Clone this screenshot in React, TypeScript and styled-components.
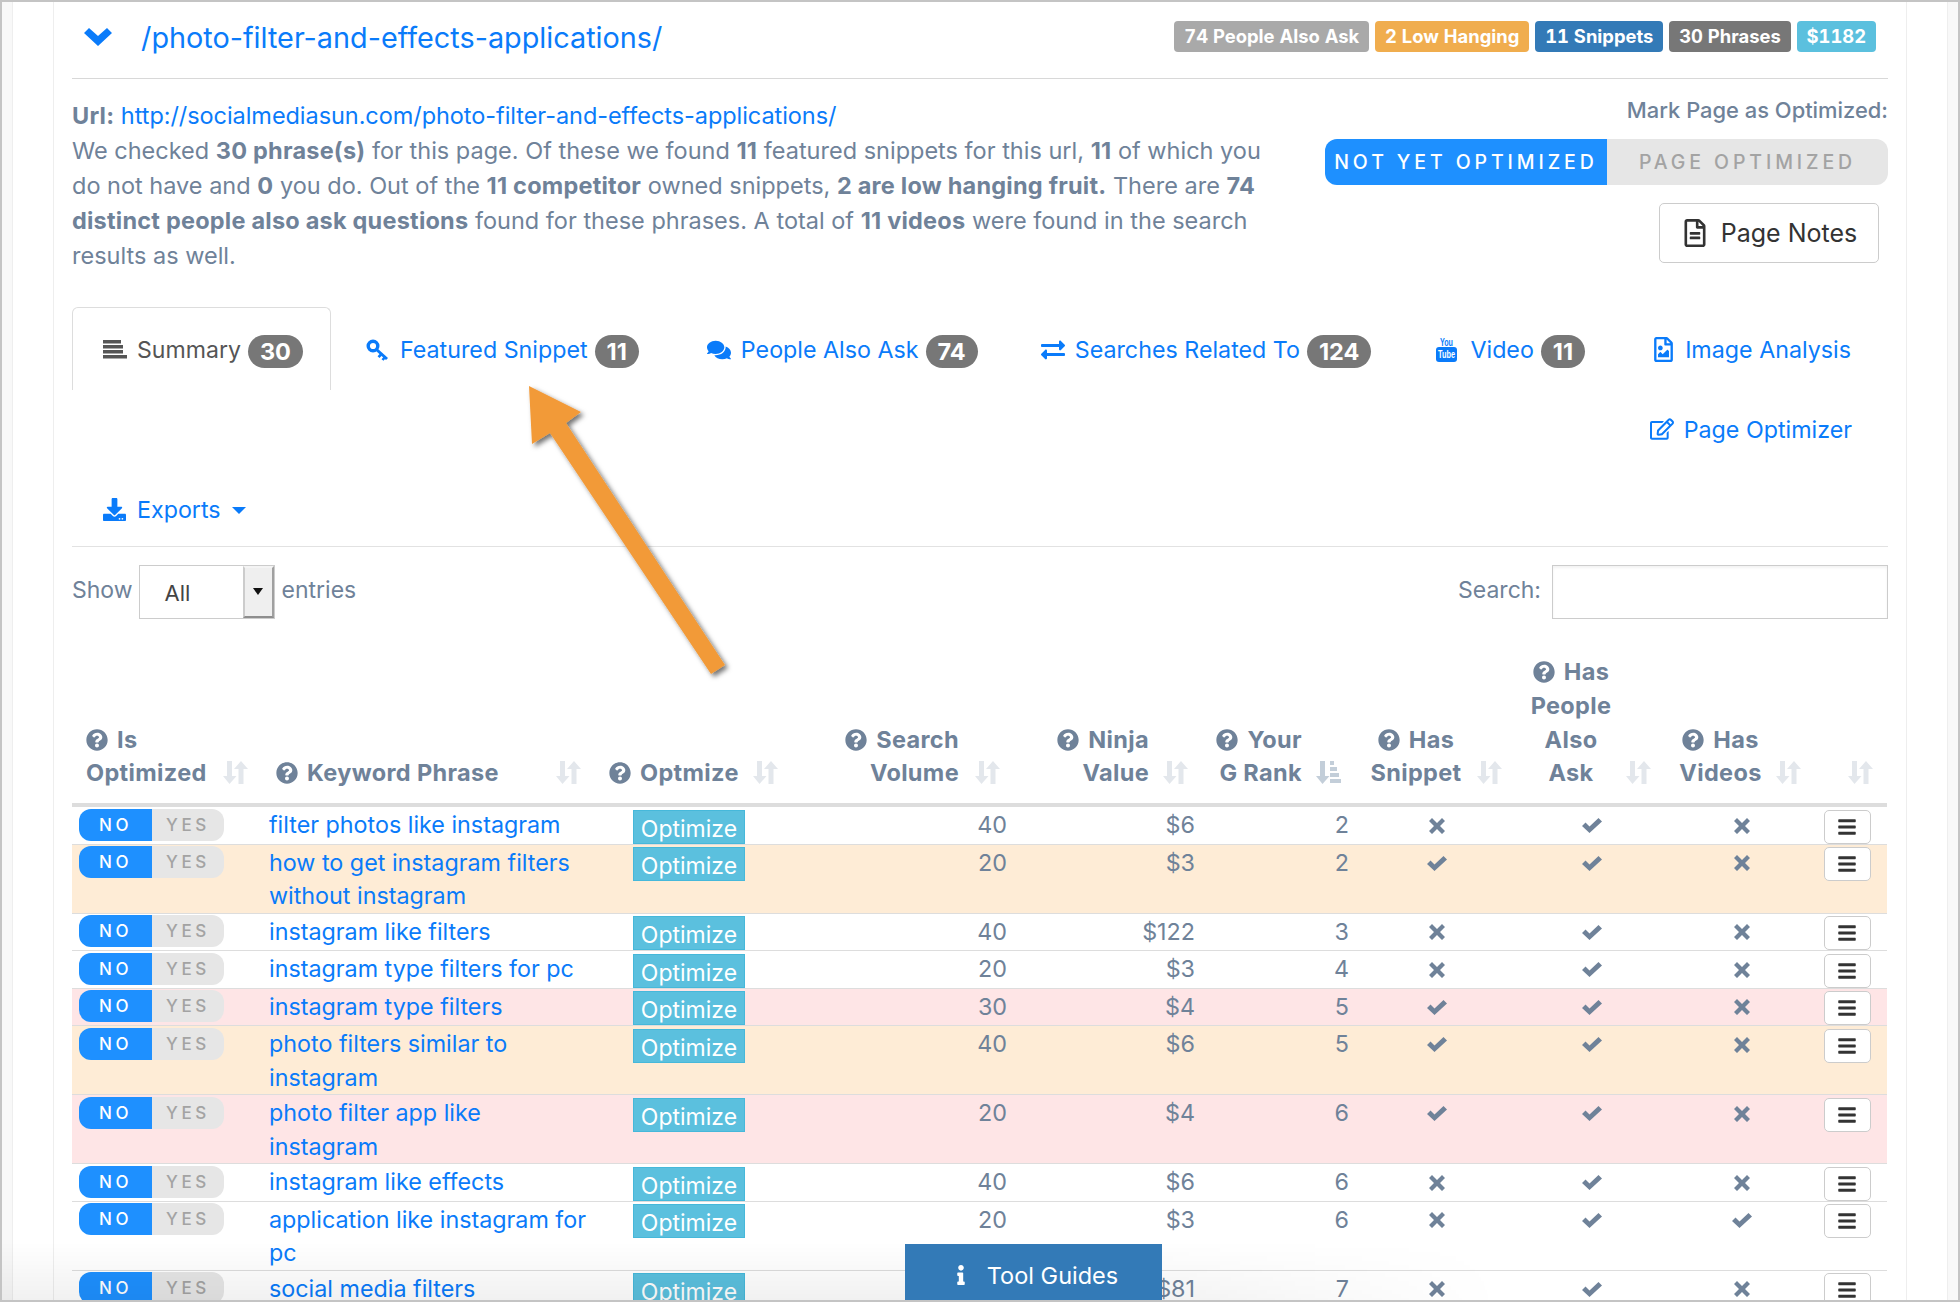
import styled, { createGlobalStyle } from "styled-components"
import {
  FaBars,
  FaComments,
  FaDownload,
  FaExchangeAlt,
  FaInfo,
  FaQuestionCircle,
  FaRegEdit,
  FaRegFileAlt,
  FaRegFileImage
} from "react-icons/fa"

const SLATE = "#6f8299"
const LINK = "#0a7bfa"

const GlobalStyle = createGlobalStyle`
  html, body { margin: 0; padding: 0; background: #fff; }
  body { font-family: Inter, "Liberation Sans", sans-serif; color: ${SLATE}; }
  * { box-sizing: border-box; }
  a { color: ${LINK}; text-decoration: none; }
`

const Window = styled.div`
  position: relative;
  width: 1960px;
  height: 1302px;
  overflow: hidden;
  background: #f8f8f8;
  border: 2px solid #c4c4c4;
  padding: 0 10px;
`

const Column = styled.div`
  height: 100%;
  background: #fff;
  border-left: 1px solid #eee;
  border-right: 1px solid #eee;
  padding: 0 40px;
`

const Panel = styled.div`
  height: 100%;
  background: #fff;
  border-left: 1px solid #eee;
  border-right: 1px solid #eee;
  padding: 0 18px;
`

const Header = styled.div`
  height: 77px;
  border-bottom: 1px solid #d8d8d8;
  display: flex;
  justify-content: space-between;
  padding: 19px 12px 0 12px;
`

const TitleWrap = styled.div`
  display: flex;
  align-items: flex-start;
  color: ${LINK};
  gap: 29px;
`

const Chevron = styled.svg`
  margin-top: 7px;
  flex: none;
`

const Title = styled.a`
  font-size: 28.8px;
  line-height: 34px;
`

const Badges = styled.div`
  display: flex;
  gap: 6px;
`

const Badge = styled.span<{ $bg: string }>`
  height: 31px;
  line-height: 30px;
  padding: 0 9.9px;
  border-radius: 4px;
  background: ${p => p.$bg};
  color: #fff;
  font-size: 18.4px;
  font-weight: 700;
  font-variant-numeric: tabular-nums;
`

const Intro = styled.div`
  display: flex;
  justify-content: space-between;
  padding-top: 19px;
  height: 228px;
`

const Para = styled.div`
  width: 1210px;
  font-size: 23.5px;
  line-height: 35px;
  b {
    font-weight: 700;
    letter-spacing: 0.22px;
  }
  a { letter-spacing: -0.06px; }
`

const Side = styled.div`
  width: 563px;
  display: flex;
  flex-direction: column;
  align-items: flex-end;
  margin-top: -3px;
`

const MarkLabel = styled.div`
  font-size: 21.9px;
  line-height: 30px;
  font-weight: 500;
`

const Switch = styled.div`
  display: flex;
  width: 563px;
  height: 46px;
  margin-top: 13.5px;
  border-radius: 12px;
  overflow: hidden;
`

const SwitchPart = styled.div<{ $on?: boolean }>`
  width: ${p => (p.$on ? 282 : 281)}px;
  background: ${p => (p.$on ? "#1e90ff" : "#e6e6e6")};
  color: ${p => (p.$on ? "#fff" : "#a3a3a3")};
  font-size: 19.5px;
  font-weight: 500;
  letter-spacing: 3.9px;
  line-height: 46px;
  text-align: center;
  white-space: nowrap;
`

const NotesButton = styled.button`
  display: flex;
  align-items: center;
  justify-content: center;
  gap: 12px;
  width: 220px;
  height: 60px;
  margin: 18px 9px 0 0;
  background: #fff;
  border: 1px solid #ccc;
  border-radius: 5px;
  color: #333;
  font-family: inherit;
  font-size: 25px;
`

const TabRow = styled.div<{ $end?: boolean; $h: number; $top?: number }>`
  display: flex;
  height: ${p => p.$h}px;
  padding: ${p => p.$top ?? 0}px ${p => (p.$end ? 5 : 0)}px 0 0;
  justify-content: ${p => (p.$end ? "flex-end" : "flex-start")};
  align-items: center;
`

const Tab = styled.a<{ $active?: boolean; $gap?: number }>`
  display: flex;
  align-items: center;
  height: 83px;
  padding: 1px ${p => (p.$active ? 27 : 30)}px 0 30px;
  margin-left: ${p => p.$gap ?? 0}px;
  font-size: ${p => (p.$active ? 23.1 : 23.25)}px;
  color: ${p => (p.$active ? "#555" : LINK)};
  border: 1px solid ${p => (p.$active ? "#ddd" : "transparent")};
  border-bottom: 0;
  border-radius: 6px 6px 0 0;
  white-space: nowrap;
  svg { flex: none; }
`

const TabIcon = styled.span`
  display: flex;
  width: 34px;
`

const Pill = styled.span`
  height: 33px;
  line-height: 33px;
  margin-left: 7px;
  padding: 0 12px;
  margin-top: 4px;
  background: #777;
  color: #fff;
  border-radius: 17px;
  font-size: 23.5px;
  font-weight: 700;
`

const Caret = styled.span`
  width: 0;
  height: 0;
  margin: 2px 0 0 11px;
  border-left: 7px solid transparent;
  border-right: 7px solid transparent;
  border-top: 7px solid ${LINK};
`

const Filters = styled.div`
  border-top: 1px solid #e2e2e2;
  padding-top: 18px;
  display: flex;
  justify-content: space-between;
  font-size: 23px;
`

const FilterGroup = styled.div`
  display: flex;
  align-items: flex-start;
  gap: 6px;
  line-height: 50px;
`

const SelectBox = styled.div`
  position: relative;
  width: 136px;
  height: 54px;
  margin-right: 1px;
  border: 1px solid #ccc;
  background: #fff;
  color: #444;
  font-size: 22px;
  line-height: 54px;
  padding-left: 25px;
`

const SelectArrow = styled.span`
  position: absolute;
  right: 0;
  top: 0;
  bottom: 0;
  width: 31px;
  display: flex;
  align-items: center;
  justify-content: center;
  background: #efefef;
  border: 2px solid;
  border-color: #f4f4f4 #a0a0a0 #8e8e8e #ccc;
  &::after {
    content: "";
    border-left: 5px solid transparent;
    border-right: 5px solid transparent;
    border-top: 7px solid #111;
    margin-top: -2px;
  }
`

const SearchInput = styled.input`
  width: 336px;
  height: 54px;
  border: 1px solid #ccc;
  box-shadow: inset 0 2px 3px rgba(0, 0, 0, 0.05);
  margin-left: 5px;
`

const Table = styled.table`
  width: 1815px;
  margin-top: 36px;
  table-layout: fixed;
  border-collapse: separate;
  border-spacing: 0;
`

const Th = styled.th<{ $align?: string; $pr?: number }>`
  position: relative;
  padding: 0 ${p => p.$pr ?? 53}px 13px 14px;
  border-bottom: 4px solid #ddd;
  text-align: ${p => p.$align ?? "left"};
  vertical-align: bottom;
  font-size: 23.5px;
  letter-spacing: 0.35px;
  line-height: 33.75px;
  font-weight: 700;
  color: ${SLATE};
  white-space: nowrap;
`

const HelpIcon = styled(FaQuestionCircle)`
  width: 22px;
  height: 22px;
  vertical-align: -3px;
  margin-right: 9px;
`

const SortSvg = styled.svg`
  position: absolute;
  right: 14px;
  bottom: 18px;
  width: 25px;
  height: 25px;
`

const Tr = styled.tr<{ $tone?: string }>`
  background: ${p => (p.$tone === "orange" ? "#feecd6" : p.$tone === "pink" ? "#fee5e6" : "#fff")};
`

const Td = styled.td<{ $align?: string; $pl?: number; $pr?: number }>`
  padding: 1px ${p => p.$pr ?? 7}px 0 ${p => p.$pl ?? 7}px;
  border-bottom: 1px solid #ddd;
  text-align: ${p => p.$align ?? "left"};
  vertical-align: top;
  font-size: 23.3px;
  line-height: 33.5px;
`

const Toggle = styled.div`
  display: flex;
  width: 145px;
  height: 32px;
  margin-top: 0.5px;
  border-radius: 12px;
  overflow: hidden;
  font-size: 17px;
  font-weight: 500;
  line-height: 32px;
  letter-spacing: 3.6px;
  text-align: center;
`

const ToggleNo = styled.span`
  width: 73px;
  background: #1e90ff;
  color: #fff;
`

const ToggleYes = styled.span`
  width: 72px;
  background: #e6e6e6;
  color: #a3a3a3;
`

const OptimizeBtn = styled.a`
  display: block;
  width: 112px;
  height: 34px;
  margin-top: 1.5px;
  background: #5bc0de;
  border: 1px solid #46b8da;
  color: #fff;
  font-size: 23px;
  line-height: 36px;
  text-align: center;
`

const MenuBtn = styled.button`
  display: flex;
  align-items: center;
  justify-content: center;
  width: 47px;
  height: 34px;
  margin: 1.5px 0 0 1.5px;
  padding: 0;
  background: #fff;
  border: 1px solid #ccc;
  border-radius: 5px;
  color: #333;
`

const MarkBox = styled.div`
  display: flex;
  justify-content: center;
  align-items: center;
  height: 16px;
  margin: 9.5px 0 0 3px;
`

const BottomFade = styled.div`
  position: absolute;
  left: 0;
  bottom: 0;
  width: 1500px;
  height: 58px;
  pointer-events: none;
  background: linear-gradient(to top, rgba(0, 0, 0, 0.055), rgba(0, 0, 0, 0));
  mask-image: linear-gradient(to right, #000 75%, transparent);
`

const ToolGuides = styled.div`
  position: absolute;
  left: 903px;
  bottom: 0;
  width: 257px;
  height: 56px;
  background: #337ab7;
  color: #fff;
  display: flex;
  align-items: center;
  justify-content: center;
  gap: 16px;
  font-size: 23.5px;
  padding: 6px 0 0 2px;
`

const ArrowSvg = styled.svg`
  position: absolute;
  left: 496px;
  top: 366px;
  width: 250px;
  height: 320px;
  pointer-events: none;
`

const Help = () => <HelpIcon />

const SortIcon = ({ active }: { active?: boolean }) => {
  const light = "#e3e7ec"
  return (
    <SortSvg viewBox="0 0 25 25">
      <path d="M4 1h5v15h4.500l-7 8-6.500-8H4z" fill={active ? "#c3ced9" : light} />
      {active ? (
        <path d="M14 1h4v4h-4zM14 7h7v4h-7zM14 13h9v4h-9zM14 19h11v4H14z" fill="#c3ced9" />
      ) : (
        <path d="M18 1l7 8h-4.500v15h-5V9H11z" fill={light} />
      )}
    </SortSvg>
  )
}

const SummaryIcon = () => (
  <svg width="24" height="19" viewBox="0 0 24 19" fill="currentColor">
    <path d="M0 0h18v3.600H0zM0 5h20v3.600H0zM0 10h20v3.600H0zM0 15h24v3.600H0z" />
  </svg>
)

const KeyIcon = () => (
  <svg width="23" height="22" viewBox="0 0 23 22" fill="none" stroke="currentColor">
    <circle cx="7" cy="7" r="4.800" strokeWidth="3.400" />
    <path d="M10.500 10.500L21 20" strokeWidth="3" />
    <path d="M15.500 15l-3 3.200M19 18.200l-2.500 2.800" strokeWidth="2.600" />
  </svg>
)

const YoutubeIcon = () => (
  <svg width="21" height="25" viewBox="0 0 21 25">
    <text x="10.500" y="8.500" textAnchor="middle" fontSize="10" fontFamily="Liberation Sans" fontWeight="700" fill={LINK} textLength="13" lengthAdjust="spacingAndGlyphs">
      You
    </text>
    <rect x="0" y="10" width="21" height="15" rx="3" fill={LINK} />
    <text x="10.500" y="21" textAnchor="middle" fontSize="10.500" fontFamily="Liberation Sans" fontWeight="700" fill="#fff" textLength="17" lengthAdjust="spacingAndGlyphs">
      Tube
    </text>
  </svg>
)

const CheckMark = () => (
  <svg width="20" height="15" viewBox="0 0 20 15" fill={SLATE}>
    <path d="M0 8l3.500-3.500 4 4L16.500 0 20 3.500 7.500 15z" />
  </svg>
)

const CrossMark = () => (
  <svg width="16" height="16" viewBox="0 0 16 16" fill={SLATE}>
    <path d="M3 0l5 5 5-5 3 3-5 5 5 5-3 3-5-5-5 5-3-3 5-5-5-5z" />
  </svg>
)

const rows = [
  { kw: "filter photos like instagram", vol: 40, val: "$6", rank: 2, sn: false, paa: true, vid: false },
  { kw: "how to get instagram filters without instagram", vol: 20, val: "$3", rank: 2, sn: true, paa: true, vid: false, tone: "orange" },
  { kw: "instagram like filters", vol: 40, val: "$122", rank: 3, sn: false, paa: true, vid: false },
  { kw: "instagram type filters for pc", vol: 20, val: "$3", rank: 4, sn: false, paa: true, vid: false },
  { kw: "instagram type filters", vol: 30, val: "$4", rank: 5, sn: true, paa: true, vid: false, tone: "pink" },
  { kw: "photo filters similar to instagram", vol: 40, val: "$6", rank: 5, sn: true, paa: true, vid: false, tone: "orange" },
  { kw: "photo filter app like instagram", vol: 20, val: "$4", rank: 6, sn: true, paa: true, vid: false, tone: "pink" },
  { kw: "instagram like effects", vol: 40, val: "$6", rank: 6, sn: false, paa: true, vid: false },
  { kw: "application like instagram for pc", vol: 20, val: "$3", rank: 6, sn: false, paa: true, vid: true },
  { kw: "social media filters", vol: 40, val: "$81", rank: 7, sn: false, paa: true, vid: false }
]

const colWidths = [190, 333, 197, 222, 188, 153, 161, 149, 150, 72]

const Mark = ({ on }: { on: boolean }) => <MarkBox>{on ? <CheckMark /> : <CrossMark />}</MarkBox>

const App = () => {
  return (
    <>
      <GlobalStyle />
      <Window>
        <Column>
          <Panel>
            <Header>
              <TitleWrap>
                <Chevron width="28" height="18" viewBox="0 0 28 18" fill="currentColor">
                  <path d="M0 5l5-5 9 8 9-8 5 5-14 13z" />
                </Chevron>
                <Title>/photo-filter-and-effects-applications/</Title>
              </TitleWrap>
              <Badges>
                <Badge $bg="#a9a9a9">74 People Also Ask</Badge>
                <Badge $bg="#f0ad4e">2 Low Hanging</Badge>
                <Badge $bg="#337ab7">11 Snippets</Badge>
                <Badge $bg="#777">30 Phrases</Badge>
                <Badge $bg="#5bc0de">$1182</Badge>
              </Badges>
            </Header>

            <Intro>
              <Para>
                <b>Url:</b> <a>http://socialmediasun.com/photo-filter-and-effects-applications/</a>
                <br />
                We checked <b>30 phrase(s)</b> for this page. Of these we found <b>11</b> featured snippets for this url, <b>11</b> of which you do not
                have and <b>0</b> you do. Out of the <b>11 competitor</b> owned snippets, <b>2 are low hanging fruit.</b> There are <b>74 distinct people also ask questions</b> found for these phrases. A total of <b>11 videos</b> were found in the search results as well.
              </Para>
              <Side>
                <MarkLabel>Mark Page as Optimized:</MarkLabel>
                <Switch>
                  <SwitchPart $on>NOT YET OPTIMIZED</SwitchPart>
                  <SwitchPart>PAGE OPTIMIZED</SwitchPart>
                </Switch>
                <NotesButton>
                  <FaRegFileAlt size={28} />
                  Page Notes
                </NotesButton>
              </Side>
            </Intro>

            <TabRow $h={83}>
              <Tab $active>
                <TabIcon>
                  <SummaryIcon />
                </TabIcon>
                Summary
                <Pill>30</Pill>
              </Tab>
              <Tab $gap={4}>
                <TabIcon>
                  <KeyIcon />
                </TabIcon>
                Featured Snippet
                <Pill>11</Pill>
              </Tab>
              <Tab $gap={6}>
                <TabIcon>
                  <FaComments size={24} />
                </TabIcon>
                People Also Ask
                <Pill>74</Pill>
              </Tab>
              <Tab $gap={1}>
                <TabIcon>
                  <FaExchangeAlt size={24} />
                </TabIcon>
                Searches Related To
                <Pill>124</Pill>
              </Tab>
              <Tab $gap={3}>
                <TabIcon>
                  <YoutubeIcon />
                </TabIcon>
                Video
                <Pill>11</Pill>
              </Tab>
              <Tab $gap={4}>
                <TabIcon>
                  <FaRegFileImage size={25} />
                </TabIcon>
                Image Analysis
              </Tab>
            </TabRow>
            <TabRow $end $h={76}>
              <Tab>
                <TabIcon>
                  <FaRegEdit size={24} />
                </TabIcon>
                Page Optimizer
              </Tab>
            </TabRow>
            <TabRow $h={80} $top={4}>
              <Tab>
                <TabIcon>
                  <FaDownload size={23} />
                </TabIcon>
                Exports
                <Caret />
              </Tab>
            </TabRow>

            <Filters>
              <FilterGroup>
                Show
                <SelectBox>
                  All
                  <SelectArrow />
                </SelectBox>
                entries
              </FilterGroup>
              <FilterGroup>
                Search:
                <SearchInput />
              </FilterGroup>
            </Filters>

            <Table>
              <colgroup>
                {colWidths.map((w, i) => (
                  <col key={i} style={{ width: w }} />
                ))}
              </colgroup>
              <thead>
                <tr>
                  <Th>
                    <Help />Is
                    <br />
                    Optimized
                    <SortIcon />
                  </Th>
                  <Th>
                    <Help />Keyword Phrase
                    <SortIcon />
                  </Th>
                  <Th>
                    <Help />Optmize
                    <SortIcon />
                  </Th>
                  <Th $align="right" $pr={55}>
                    <Help />Search
                    <br />
                    Volume
                    <SortIcon />
                  </Th>
                  <Th $align="right">
                    <Help />Ninja
                    <br />
                    Value
                    <SortIcon />
                  </Th>
                  <Th $align="right">
                    <Help />Your
                    <br />
                    G Rank
                    <SortIcon active />
                  </Th>
                  <Th $align="center">
                    <Help />Has
                    <br />
                    Snippet
                    <SortIcon />
                  </Th>
                  <Th $align="center">
                    <Help />Has
                    <br />
                    People
                    <br />
                    Also
                    <br />
                    Ask
                    <SortIcon />
                  </Th>
                  <Th $align="center">
                    <Help />Has
                    <br />
                    Videos
                    <SortIcon />
                  </Th>
                  <Th $pr={0}>
                    <SortIcon />
                  </Th>
                </tr>
              </thead>
              <tbody>
                {rows.map((r, i) => (
                  <Tr key={i} $tone={r.tone}>
                    <Td>
                      <Toggle>
                        <ToggleNo>NO</ToggleNo>
                        <ToggleYes>YES</ToggleYes>
                      </Toggle>
                    </Td>
                    <Td>
                      <a>{r.kw}</a>
                    </Td>
                    <Td $pl={38}>
                      <OptimizeBtn>Optimize</OptimizeBtn>
                    </Td>
                    <Td $align="right">{r.vol}</Td>
                    <Td $align="right">{r.val}</Td>
                    <Td $align="right" $pr={6}>
                      {r.rank}
                    </Td>
                    <Td $align="center">
                      <Mark on={r.sn} />
                    </Td>
                    <Td $align="center">
                      <Mark on={r.paa} />
                    </Td>
                    <Td $align="center">
                      <Mark on={r.vid} />
                    </Td>
                    <Td>
                      <MenuBtn>
                        <FaBars size={20} />
                      </MenuBtn>
                    </Td>
                  </Tr>
                ))}
              </tbody>
            </Table>
          </Panel>
        </Column>

        <BottomFade />
        <ToolGuides>
          <FaInfo size={20} />
          Tool Guides
        </ToolGuides>

        <ArrowSvg viewBox="498 368 250 320">
          <defs>
            <filter id="arrowShadow" x="-20%" y="-20%" width="140%" height="140%">
              <feDropShadow dx="3" dy="3" stdDeviation="2.500" floodColor="#000" floodOpacity="0.55" />
            </filter>
          </defs>
          <polygon
            points="529,386 581,412 566,423 725,665 711,674 550,433 532,444"
            fill="#f29a38"
            filter="url(#arrowShadow)"
          />
        </ArrowSvg>
      </Window>
    </>
  )
}

export default App
